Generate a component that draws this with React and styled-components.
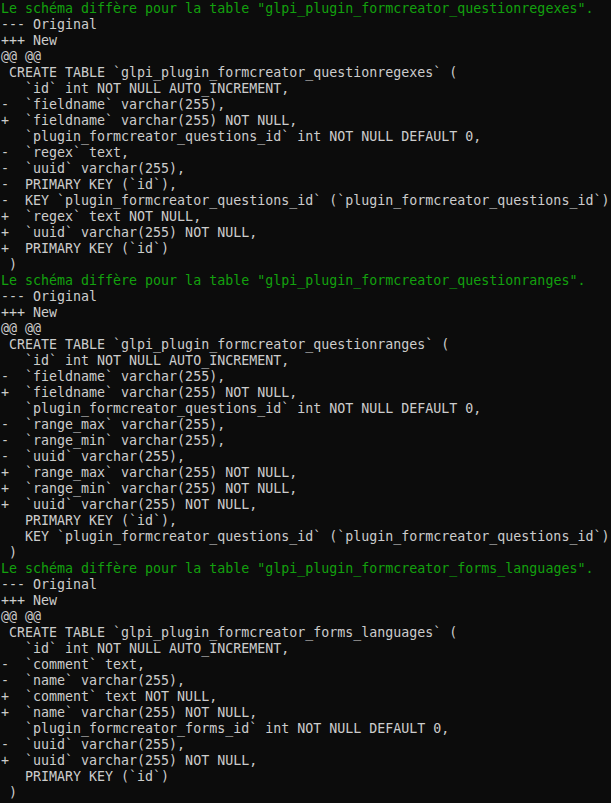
import styled, { createGlobalStyle } from "styled-components";

const GlobalStyle = createGlobalStyle`
    html, body {
        margin: 0;
        padding: 0;
        background-color: #0c0c0c;
    }
`

const blocks = [
    {
        table: 'glpi_plugin_formcreator_questionregexes',
        lines: [
            '   `id` int NOT NULL AUTO_INCREMENT,',
            '-  `fieldname` varchar(255),',
            '+  `fieldname` varchar(255) NOT NULL,',
            '   `plugin_formcreator_questions_id` int NOT NULL DEFAULT 0,',
            '-  `regex` text,',
            '-  `uuid` varchar(255),',
            '-  PRIMARY KEY (`id`),',
            '-  KEY `plugin_formcreator_questions_id` (`plugin_formcreator_questions_id`)',
            '+  `regex` text NOT NULL,',
            '+  `uuid` varchar(255) NOT NULL,',
            '+  PRIMARY KEY (`id`)',
        ],
    },
    {
        table: 'glpi_plugin_formcreator_questionranges',
        lines: [
            '   `id` int NOT NULL AUTO_INCREMENT,',
            '-  `fieldname` varchar(255),',
            '+  `fieldname` varchar(255) NOT NULL,',
            '   `plugin_formcreator_questions_id` int NOT NULL DEFAULT 0,',
            '-  `range_max` varchar(255),',
            '-  `range_min` varchar(255),',
            '-  `uuid` varchar(255),',
            '+  `range_max` varchar(255) NOT NULL,',
            '+  `range_min` varchar(255) NOT NULL,',
            '+  `uuid` varchar(255) NOT NULL,',
            '   PRIMARY KEY (`id`),',
            '   KEY `plugin_formcreator_questions_id` (`plugin_formcreator_questions_id`)',
        ],
    },
    {
        table: 'glpi_plugin_formcreator_forms_languages',
        lines: [
            '   `id` int NOT NULL AUTO_INCREMENT,',
            '-  `comment` text,',
            '-  `name` varchar(255),',
            '+  `comment` text NOT NULL,',
            '+  `name` varchar(255) NOT NULL,',
            '   `plugin_formcreator_forms_id` int NOT NULL DEFAULT 0,',
            '-  `uuid` varchar(255),',
            '+  `uuid` varchar(255) NOT NULL,',
            '   PRIMARY KEY (`id`)',
        ],
    },
]

export default function App() {
    return (
        <Terminal>
            <GlobalStyle />
            {blocks.map((block, index) => (
                <Block key={index}>
                    <Line $green>Le schéma diffère pour la table "{block.table}".</Line>
                    <Line>--- Original</Line>
                    <Line>+++ New</Line>
                    <Line>@@ @@</Line>
                    <Line>{` CREATE TABLE \`${block.table}\` (`}</Line>
                    {block.lines.map((line, i) => (
                        <Line key={i}>{line}</Line>
                    ))}
                    <Line>{' )'}</Line>
                </Block>
            ))}
        </Terminal>
    )
}

const Terminal = styled.div`
    width: 611px;
    height: 803px;
    overflow: hidden;
    background-color: #0c0c0c;
    color: #cccccc;
    font-family: "DejaVu Sans Mono", "Liberation Mono", monospace;
    font-size: 13.3px;
    padding: 1px 0 0 1px;
    box-sizing: border-box;
`

const Block = styled.div`
    display: flex;
    flex-direction: column;
`

const Line = styled.div`
    height: 16px;
    line-height: 16px;
    white-space: pre;
    color: ${props => props.$green ? '#13a10e' : '#cccccc'};
`
